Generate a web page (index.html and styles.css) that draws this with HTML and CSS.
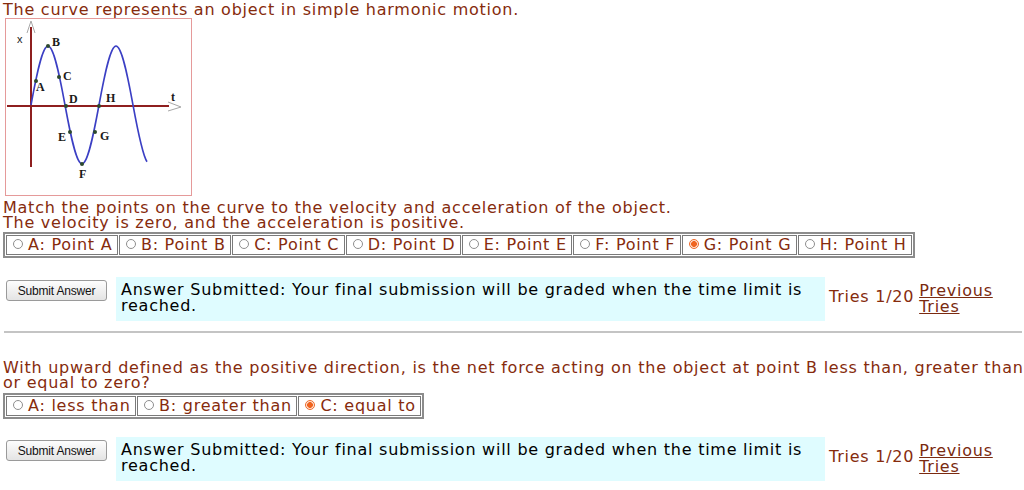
FILE: index.html
```html
<!DOCTYPE html>
<html>
<head>
<meta charset="utf-8">
<link rel="stylesheet" href="styles.css">
</head>
<body>
<div class="problem">
  <p class="qtext first">The curve represents an object in simple harmonic motion.</p>
  <div class="figure">
    <svg width="187" height="178" viewBox="5 18 187 178" xmlns="http://www.w3.org/2000/svg">
      <rect x="5.5" y="18.5" width="186" height="177" fill="#fff" stroke="#e59a9a" stroke-width="1"/>
      <line x1="7" y1="106" x2="169" y2="106" stroke="#8e1f1f" stroke-width="2"/>
      <line x1="31" y1="27" x2="31" y2="167" stroke="#8e1f1f" stroke-width="2"/>
      <polyline points="168,102 181,107 168,111" fill="none" stroke="#a8a8a8" stroke-width="1"/>
      <polyline points="27,33 31,21 35,33" fill="none" stroke="#a8a8a8" stroke-width="1"/>
      <path d="M31,105 C36.67,74.1 42.33,46 48,46 C53.67,46 59.33,74.1 65,105 C70.67,135.9 76.33,164 82,164 C87.67,164 93.33,135.9 99,105 C104.67,74.1 110.33,46 116,46 C121.67,46 127.33,74.1 133,105 C137.67,130.4 142.33,154.7 147,161.7" fill="none" stroke="#3b3fc4" stroke-width="1.6"/>
      <g fill="#2d4a2d">
        <circle cx="36" cy="81" r="2"/>
        <circle cx="48" cy="46" r="2"/>
        <circle cx="59" cy="77" r="2"/>
        <circle cx="66" cy="106" r="2"/>
        <circle cx="70" cy="132" r="2"/>
        <circle cx="82" cy="164" r="2"/>
        <circle cx="95" cy="132" r="2"/>
        <circle cx="99" cy="106" r="2"/>
      </g>
      <g class="lbl">
        <text x="52" y="46">B</text>
        <text x="36" y="91">A</text>
        <text x="63" y="80">C</text>
        <text x="69" y="103">D</text>
        <text x="106" y="102">H</text>
        <text x="171" y="101">t</text>
        <text x="58" y="141">E</text>
        <text x="100" y="140">G</text>
        <text x="79" y="178">F</text>
      </g>
      <text class="xlbl" x="17" y="43">x</text>
    </svg>
  </div>
  <p class="qtext second">Match the points on the curve to the velocity and acceleration of the object.<br>The velocity is zero, and the acceleration is positive.</p>
  <table class="choices">
    <tr>
      <td><span class="radio"></span>A: Point A</td>
      <td><span class="radio"></span>B: Point B</td>
      <td><span class="radio"></span>C: Point C</td>
      <td><span class="radio"></span>D: Point D</td>
      <td><span class="radio"></span>E: Point E</td>
      <td><span class="radio"></span>F: Point F</td>
      <td><span class="radio checked"></span>G: Point G</td>
      <td><span class="radio"></span>H: Point H</td>
    </tr>
  </table>
  <div class="submit-row">
    <button class="submit" type="button">Submit Answer</button>
    <div class="answer-box">Answer Submitted: Your final submission will be graded when the time limit is reached.</div>
    <span class="tries">Tries 1/20</span>
    <a class="prev" href="#">Previous<br>Tries</a>
  </div>
</div>
<hr class="sep">
<div class="problem">
  <p class="qtext third">With upward defined as the positive direction, is the net force acting on the object at point B less than, greater than<br>or equal to zero?</p>
  <table class="choices">
    <tr>
      <td><span class="radio"></span>A: less than</td>
      <td><span class="radio"></span>B: greater than</td>
      <td><span class="radio checked"></span>C: equal to</td>
    </tr>
  </table>
  <div class="submit-row">
    <button class="submit" type="button">Submit Answer</button>
    <div class="answer-box">Answer Submitted: Your final submission will be graded when the time limit is reached.</div>
    <span class="tries">Tries 1/20</span>
    <a class="prev" href="#">Previous<br>Tries</a>
  </div>
</div>
</body>
</html>
```
FILE: styles.css
```css
html, body {
  margin: 0;
  padding: 0;
  background: #fff;
}
body {
  padding-left: 3px;
  font-family: "DejaVu Sans", Verdana, sans-serif;
  font-size: 16px;
  letter-spacing: 0.75px;
  color: #862b0d;
  width: 1021px;
}
.qtext {
  margin: 0;
  line-height: 15px;
  white-space: nowrap;
}
.qtext.first { padding-top: 2px; }
.qtext.second { margin-top: 4px; }
.qtext.third { margin-top: 27px; }
.figure {
  margin: 1px 0 0 2px;
  width: 187px;
  height: 178px;
}
.figure svg { display: block; }
.lbl text {
  font-family: "Liberation Serif", "Times New Roman", serif;
  font-size: 12px;
  font-weight: bold;
  letter-spacing: 0;
  fill: #1a1a1a;
}
.xlbl {
  font-family: "Liberation Sans", Arial, sans-serif;
  font-size: 11px;
  letter-spacing: 0;
  fill: #222;
}
.choices {
  margin-top: 2px;
  border: 2px solid #8c8c8c;
  border-spacing: 1px;
  border-collapse: separate;
}
.qtext.third + .choices { margin-top: 3px; }
.choices td {
  border: 1px solid #7a7a7a;
  padding: 1px 4.5px 1px 6px;
  line-height: 16px;
  white-space: nowrap;
}
.radio {
  display: inline-block;
  width: 8px;
  height: 8px;
  border: 1px solid #8e8e8e;
  border-radius: 50%;
  margin-right: 5px;
  vertical-align: 1px;
  background: #fff;
}
.radio.checked {
  border-color: #ef6a2a;
  background: radial-gradient(circle, #f06420 0 2.6px, #fde3d4 3.2px 100%);
}
.submit-row {
  display: flex;
  align-items: center;
  margin-top: 19px;
}
.qtext.third + .choices + .submit-row { margin-top: 18px; }
.submit {
  align-self: flex-start;
  margin: 3px 0 0 3px;
  width: 101px;
  height: 21px;
  padding: 0;
  font-family: "Liberation Sans", Arial, sans-serif;
  font-size: 12px;
  letter-spacing: -0.2px;
  color: #111;
  background: linear-gradient(#fdfdfd, #e4e4e4);
  border: 1px solid #9a9a9a;
  border-radius: 3px;
}
.answer-box {
  margin-left: 9px;
  width: 699px;
  padding: 5px 5px 7px;
  background: #dffcff;
  color: #000;
  line-height: 16px;
}
.tries {
  margin-left: 4px;
  margin-bottom: 4px;
  line-height: 16px;
  white-space: nowrap;
}
.prev {
  margin-left: 5px;
  line-height: 16px;
  color: #7a2a10;
  text-decoration: underline;
}
.sep {
  margin: 10px 0 0 1px;
  width: 1018px;
  height: 0;
  border: 0;
  border-top: 2px solid #c4c4c4;
}
```
